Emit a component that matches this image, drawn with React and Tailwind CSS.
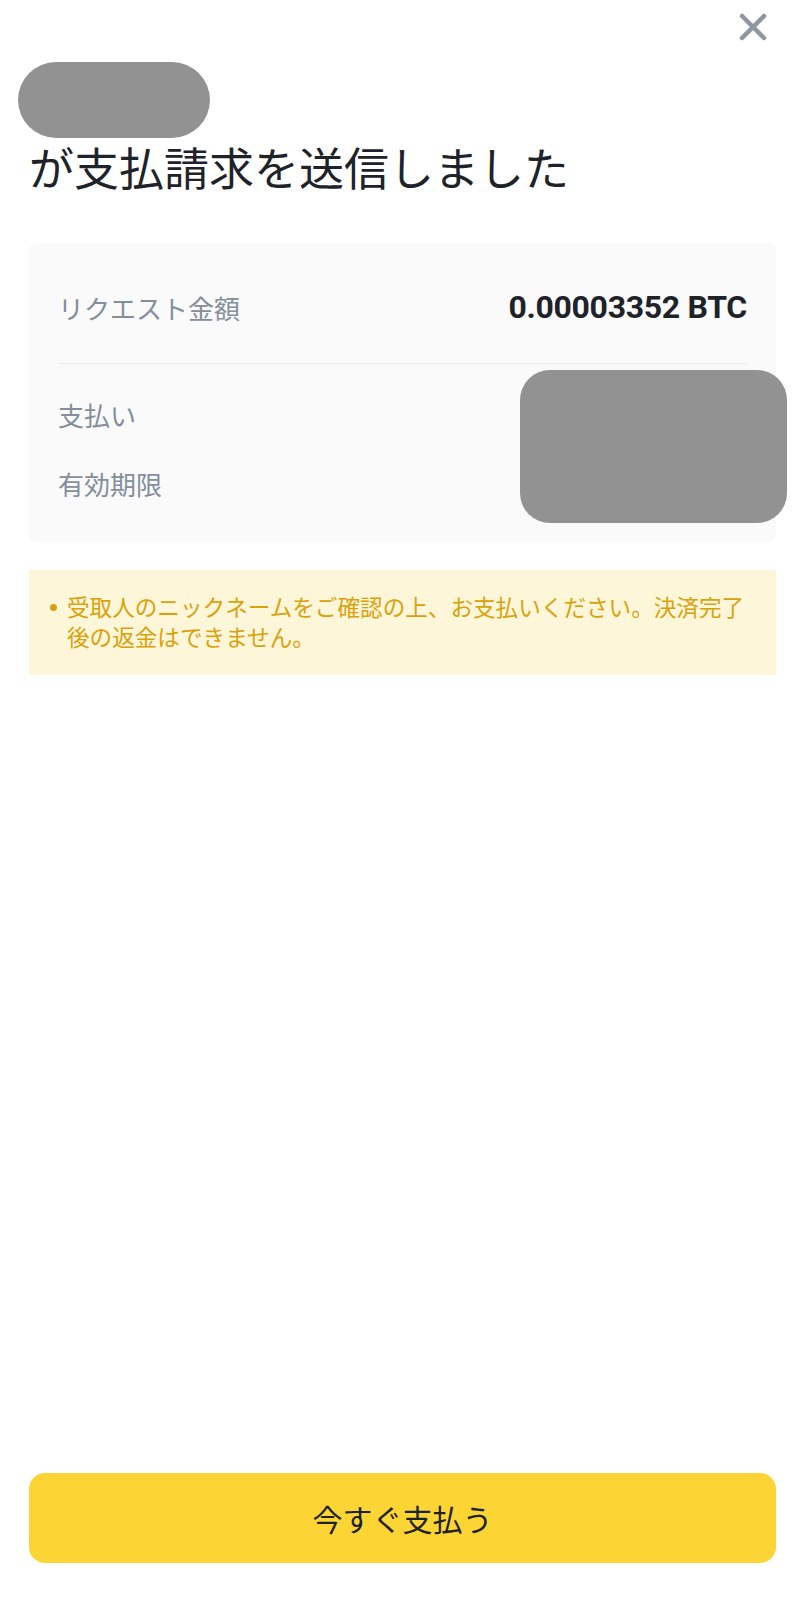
import React from 'react';

const font = { fontFamily: '"Noto Sans CJK JP", "Noto Sans", sans-serif' };

const CloseIcon = () => (
  <svg width="30" height="30" viewBox="0 0 30 30" fill="none">
    <path d="M4 4 L26 26 M26 4 L4 26" stroke="#8f96a1" strokeWidth="4.5" strokeLinecap="round" />
  </svg>
);

export default function App() {
  return (
    <div className="min-h-[1600px] w-[805px] bg-white flex flex-col" style={font}>
      <div className="flex justify-end pt-[12px] pr-[37px]">
        <CloseIcon />
      </div>

      <div className="px-[29px] flex flex-col">
        <div className="ml-[-11px] mt-[20px] w-[192px] h-[76px] rounded-full bg-[#929292]" />
        <h1 className="mt-[3px] text-[45px] leading-[52px] text-[#1e2329] font-normal">
          が支払請求を送信しました
        </h1>

        <div className="relative mt-[50px] rounded-[8px] bg-[#fafafa] px-[29px] pt-[44px] pb-[39px]">
          <div className="h-[40px] flex items-center justify-between">
            <span className="text-[26px] text-[#848e9c]">リクエスト金額</span>
            <span
              className="text-[32px] font-bold text-[#1e2329] tracking-[-0.3px]"
              style={{ fontFamily: 'Roboto, "Liberation Sans", sans-serif' }}
            >
              0.00003352 BTC
            </span>
          </div>
          <div className="mt-[36px] h-px bg-[#eaecef]" />
          <div className="mt-[30px] h-[40px] flex items-center">
            <span className="text-[26px] text-[#848e9c]">支払い</span>
          </div>
          <div className="mt-[29px] h-[40px] flex items-center">
            <span className="text-[26px] text-[#848e9c]">有効期限</span>
          </div>
          <div className="absolute left-[491px] top-[127px] w-[267px] h-[153px] rounded-[30px] bg-[#929292]" />
        </div>

        <div className="mt-[28px] bg-[#fdf6d9] pl-[21px] pt-[22px] pb-[23px]">
          <div className="flex items-start text-[22.6px] leading-[30px] text-[#d9a20c]">
            <span className="mt-[12px] mr-[10px] w-[7px] h-[7px] rounded-full bg-[#d9a20c] shrink-0" />
            <p className="w-[684px]">
              受取人のニックネームをご確認の上、お支払いください。決済完了後の返金はできません。
            </p>
          </div>
        </div>
      </div>

      <div className="mt-auto px-[29px] pb-[37px]">
        <button className="w-full h-[90px] rounded-[16px] bg-[#fcd535] text-[30px] text-[#1e2329]">
          今すぐ支払う
        </button>
      </div>
    </div>
  );
}
